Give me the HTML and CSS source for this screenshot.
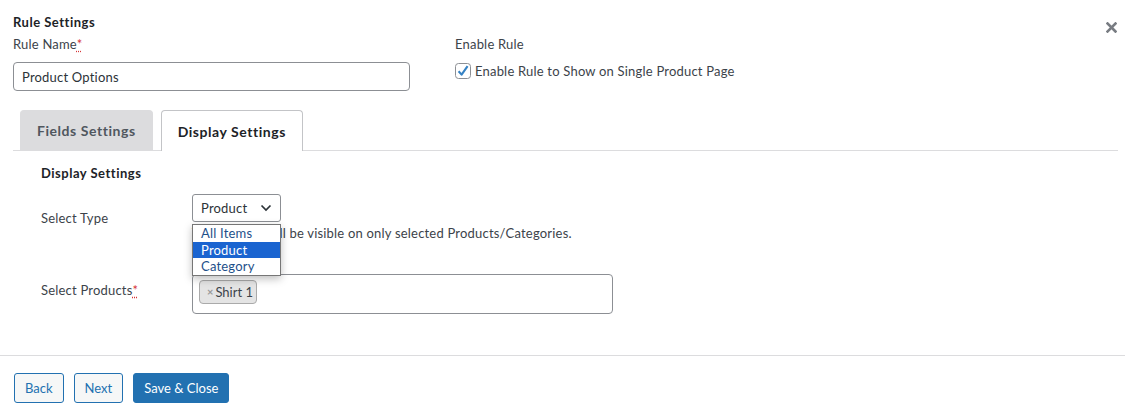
FILE: index.html
```html
<!DOCTYPE html>
<html lang="en">
<head>
<meta charset="utf-8">
<title>Rule Settings</title>
<link rel="stylesheet" href="styles.css">
</head>
<body>
<div class="modal">
  <div class="top">
    <div class="head">
      <h3 class="title">Rule Settings</h3>
      <button class="close" aria-label="Close">
        <svg width="11" height="11" viewBox="0 0 11 11"><path d="M1.5 1.5 L9.5 9.5 M9.5 1.5 L1.5 9.5" stroke="#787c82" stroke-width="2.6" stroke-linecap="square"/></svg>
      </button>
    </div>
    <div class="fields">
      <div class="field">
        <label class="lbl">Rule Name<abbr class="req" title="required">*</abbr></label>
        <input class="text-input" type="text" value="Product Options">
      </div>
      <div class="field">
        <label class="lbl">Enable Rule</label>
        <label class="check-row">
          <span class="checkbox">
            <svg width="16" height="16" viewBox="0 0 16 16"><rect x="0.5" y="0.5" width="15" height="15" rx="3" fill="#fff" stroke="#8c8f94"/><path d="M3.6 8.2 L6.6 11.6 L12.6 3.2" fill="none" stroke="#3582c4" stroke-width="2.1" stroke-linejoin="round"/></svg>
          </span>
          <span>Enable Rule to Show on Single Product Page</span>
        </label>
      </div>
    </div>
    <div class="tabs">
      <div class="tab">Fields Settings</div>
      <div class="tab active">Display Settings</div>
    </div>
    <div class="panel">
      <h4 class="section-title">Display Settings</h4>
      <div class="row row-type">
        <div class="row-label">Select Type</div>
        <div class="row-field">
          <div class="select-wrap">
            <div class="select">
              <span>Product</span>
              <svg width="12" height="8" viewBox="0 0 12 8"><path d="M1.5 1.5 L6 6 L10.5 1.5" fill="none" stroke="#2c3338" stroke-width="1.7"/></svg>
            </div>
            <ul class="options">
              <li>All Items</li>
              <li class="sel">Product</li>
              <li>Category</li>
            </ul>
          </div>
          <p class="desc">These fields will be visible on only selected Products/Categories.</p>
        </div>
      </div>
      <div class="row row-products">
        <div class="row-label">Select Products<abbr class="req" title="required">*</abbr></div>
        <div class="row-field">
          <div class="multi">
            <span class="tag"><span class="tag-x">×</span>Shirt 1</span>
          </div>
        </div>
      </div>
    </div>
  </div>
  <div class="footer">
    <button class="btn">Back</button>
    <button class="btn">Next</button>
    <button class="btn primary">Save &amp; Close</button>
  </div>
</div>
</body>
</html>
```
FILE: styles.css
```css
* { box-sizing: border-box; }
html, body { margin: 0; padding: 0; background: #fff; }
body {
  font-family: Lato, "Noto Sans", sans-serif;
  font-size: 13px;
  letter-spacing: 0.2px;
  color: #3c434a;
  width: 1125px;
  height: 414px;
  overflow: hidden;
}
.top { padding: 13px 7px 0 13px; }
.head {
  display: flex;
  justify-content: space-between;
  align-items: flex-start;
  height: 18px;
}
.title {
  margin: 0;
  font-size: 13px;
  font-weight: 700;
  letter-spacing: 0.5px;
  line-height: 18px;
  color: #1d2327;
}
.close {
  border: 0;
  background: none;
  padding: 0;
  margin-top: 9px;
  margin-right: 1px;
  width: 11px;
  height: 11px;
  display: flex;
}
.fields {
  display: grid;
  grid-template-columns: 397px 1fr;
  column-gap: 45px;
  margin-top: 4px;
}
.lbl {
  display: block;
  line-height: 18px;
  color: #3c434a;
}
.req {
  color: #d63638;
  text-decoration: underline dotted #d63638;
  text-underline-offset: 2px;
}
.text-input {
  display: block;
  margin-top: 9px;
  width: 397px;
  height: 29px;
  border: 1px solid #8c8f94;
  border-radius: 4px;
  padding: 0 8px;
  font: inherit;
  font-size: 13px;
  letter-spacing: 0.2px;
  color: #2c3338;
}
.check-row {
  display: flex;
  align-items: center;
  gap: 4px;
  margin-top: 9px;
  height: 18px;
  line-height: 18px;
}
.checkbox { display: flex; }
.tabs {
  display: flex;
  align-items: flex-end;
  gap: 8px;
  padding-left: 7px;
  margin-top: 19px;
  border-bottom: 1px solid #dcdcde;
  height: 41px;
}
.tab {
  height: 40px;
  padding: 0 16px;
  display: flex;
  align-items: center;
  font-size: 14px;
  font-weight: 700;
  letter-spacing: 0.55px;
  color: #50575e;
  background: #dcdcde;
  border: 1px solid #dcdcde;
  border-bottom: 0;
  border-radius: 4px 4px 0 0;
}
.tab.active {
  height: 41px;
  margin-bottom: -1px;
  background: #fff;
  color: #1d2327;
  border-color: #c3c4c7;
}
.panel { padding: 13px 0 0 28px; }
.section-title {
  margin: 0;
  font-size: 13px;
  font-weight: 700;
  letter-spacing: 0.5px;
  line-height: 18px;
  color: #1d2327;
}
.row {
  display: grid;
  grid-template-columns: 151px 1fr;
}
.row-type { margin-top: 12px; }
.row-type .row-label { padding-top: 15px; }
.row-label { line-height: 18px; }
.select-wrap { position: relative; width: 89px; }
.select {
  height: 28px;
  width: 89px;
  border: 1px solid #8c8f94;
  border-radius: 3px;
  display: flex;
  align-items: center;
  justify-content: space-between;
  padding: 0 8px;
  color: #2c3338;
}
.options {
  position: absolute;
  left: 0;
  top: 30px;
  width: 89px;
  margin: 0;
  padding: 0;
  list-style: none;
  background: #fff;
  border: 1px solid #767676;
  box-shadow: 0 3px 8px rgba(0,0,0,0.25);
  z-index: 2;
}
.options li {
  height: 16.5px;
  line-height: 16px;
  padding-left: 8px;
  color: #1d4f8a;
}
.options li.sel { background: #1a64d0; color: #fff; }
.desc {
  margin: 2px 0 0 0;
  line-height: 18px;
}
.row-products { margin-top: 32px; }
.row-products .row-label { padding-top: 7px; }
.multi {
  width: 421px;
  height: 40px;
  border: 1px solid #8c8f94;
  border-radius: 4px;
  padding: 5px 6px;
}
.tag {
  display: inline-flex;
  align-items: center;
  height: 24px;
  padding: 0 3px 0 7px;
  background: #e4e4e4;
  border: 1px solid #aaa;
  border-radius: 4px;
  color: #3c434a;
  line-height: 18px;
  letter-spacing: 0;
}
.tag-x {
  color: #999;
  font-size: 11px;
  font-weight: 700;
  margin-right: 2px;
}
.footer {
  margin-top: 41px;
  border-top: 1px solid #dcdcde;
  padding: 17px 14px 0 14px;
  display: flex;
  gap: 10px;
}
.btn {
  height: 30px;
  padding: 0 10px;
  border: 1px solid #2271b1;
  border-radius: 3px;
  background: #f6f7f7;
  color: #2271b1;
  font: inherit;
  font-size: 13px;
  letter-spacing: 0;
}
.btn.primary {
  background: #2271b1;
  color: #fff;
}
```
